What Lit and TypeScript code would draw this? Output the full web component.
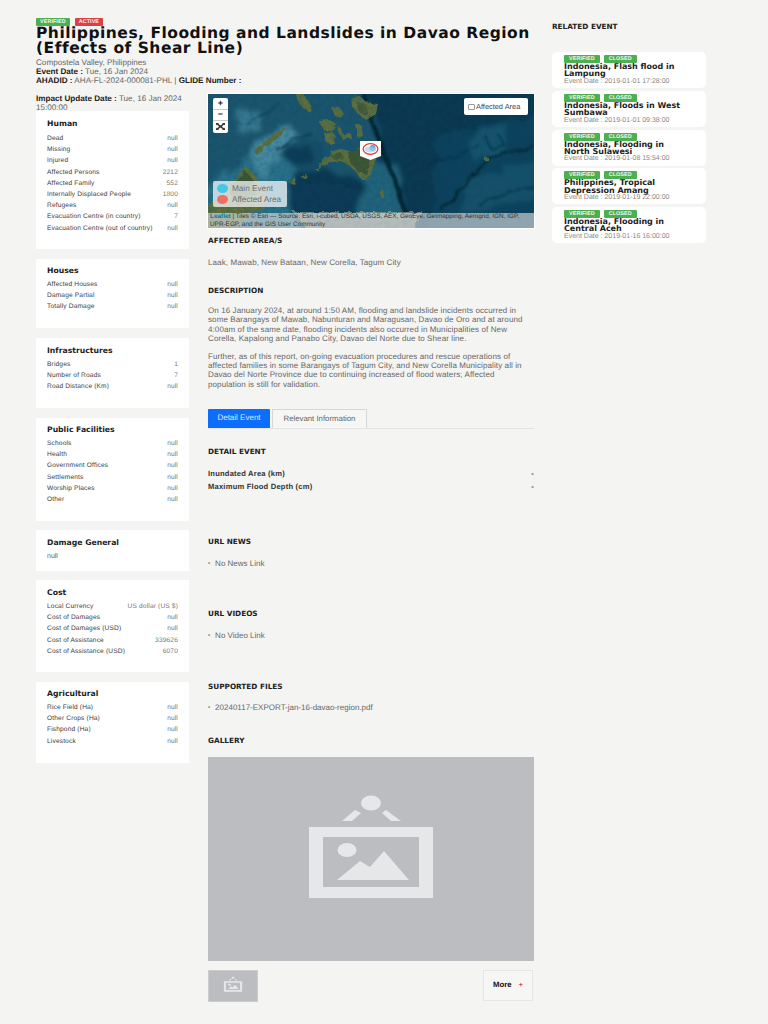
import { LitElement, html, css, svg } from "lit";
import { customElement } from "lit/decorators.js";

const cards: { title: string; rows?: [string, string][]; text?: string; cls: string }[] = [
  { title: "Human", cls: "c-human", rows: [["Dead","null"],["Missing","null"],["Injured","null"],["Affected Persons","2212"],["Affected Family","552"],["Internally Displaced People","1800"],["Refugees","null"],["Evacuation Centre (in country)","7"],["Evacuation Centre (out of country)","null"]] },
  { title: "Houses", cls: "c-houses", rows: [["Affected Houses","null"],["Damage Partial","null"],["Totally Damage","null"]] },
  { title: "Infrastructures", cls: "c-infra", rows: [["Bridges","1"],["Number of Roads","7"],["Road Distance (Km)","null"]] },
  { title: "Public Facilities", cls: "c-public", rows: [["Schools","null"],["Health","null"],["Government Offices","null"],["Settlements","null"],["Worship Places","null"],["Other","null"]] },
  { title: "Damage General", cls: "c-general", text: "null" },
  { title: "Cost", cls: "c-cost", rows: [["Local Currency","US dollar (US $)"],["Cost of Damages","null"],["Cost of Damages (USD)","null"],["Cost of Assistance","339626"],["Cost of Assistance (USD)","6070"]] },
  { title: "Agricultural", cls: "c-agri", rows: [["Rice Field (Ha)","null"],["Other Crops (Ha)","null"],["Fishpond (Ha)","null"],["Livestock","null"]] },
];

const related = [
  ["Indonesia, Flash flood in Lampung", "2019-01-01 17:28:00"],
  ["Indonesia, Floods in West Sumbawa", "2019-01-01 09:38:00"],
  ["Indonesia, Flooding in North Sulawesi", "2019-01-08 15:54:00"],
  ["Philippines, Tropical Depression Amang", "2019-01-19 22:00:00"],
  ["Indonesia, Flooding in Central Aceh", "2019-01-16 16:00:00"],
];

const placeholder = html`<svg viewBox="0 0 326 204" preserveAspectRatio="none" class="ph">
  <rect width="326" height="204" fill="#bcbdc0"></rect>
  <ellipse cx="163" cy="46" rx="10" ry="7.5" fill="#e6e7e9"></ellipse>
  <polygon points="134,64 147,53 153,56 144,64" fill="#e6e7e9"></polygon>
  <polygon points="174,56 178,53 193,64 183,64" fill="#e6e7e9"></polygon>
  <path fill-rule="evenodd" d="M101 70H225V141H101ZM115 80V130H211V80Z" fill="#e6e7e9"></path>
  <ellipse cx="139" cy="93" rx="9.5" ry="7" fill="#e6e7e9"></ellipse>
  <polygon points="129,123 152,104 162,110 176,94 201,123" fill="#e6e7e9"></polygon>
</svg>`;

const mapArt = svg`
  <defs>
    <filter id="wide" x="-20%" y="-20%" width="140%" height="140%">
      <feTurbulence type="fractalNoise" baseFrequency="0.05" numOctaves="3" seed="7"></feTurbulence>
      <feDisplacementMap in="SourceGraphic" scale="14"></feDisplacementMap>
      <feGaussianBlur stdDeviation="2.5"></feGaussianBlur>
    </filter>
    <filter id="rough" x="-10%" y="-10%" width="120%" height="120%">
      <feTurbulence type="fractalNoise" baseFrequency="0.16" numOctaves="3" seed="4"></feTurbulence>
      <feDisplacementMap in="SourceGraphic" scale="5"></feDisplacementMap>
      <feGaussianBlur stdDeviation="0.65"></feGaussianBlur>
    </filter>
    <filter id="ridge" x="-10%" y="-10%" width="120%" height="120%">
      <feTurbulence type="fractalNoise" baseFrequency="0.09" numOctaves="2" seed="11"></feTurbulence>
      <feDisplacementMap in="SourceGraphic" scale="6"></feDisplacementMap>
      <feGaussianBlur stdDeviation="1"></feGaussianBlur>
    </filter>
    <filter id="grain">
      <feTurbulence type="fractalNoise" baseFrequency="0.22" numOctaves="3" seed="2"></feTurbulence>
      <feColorMatrix values="0 0 0 0 0  0 0 0 0 0.08  0 0 0 0 0.12  1.6 0 0 0 -0.55"></feColorMatrix>
    </filter>
  </defs>
  <rect width="326" height="134" fill="#0c3650"></rect>
  <g filter="url(#wide)">
    <polygon points="-10,-10 150,-10 172,30 172,60 162,88 128,80 100,62 60,92 20,112 -10,100" fill="#1c526d"></polygon>
    <polygon points="30,18 52,18 52,38 30,38" fill="#377890"></polygon>
    <polygon points="64,42 112,46 118,76 76,82" fill="#174d68"></polygon>
    <polygon points="72,56 100,50 108,66 80,76" fill="#103a55"></polygon>
    <polygon points="-10,96 40,62 70,58 92,78 78,108 96,140 -10,140" fill="#2b6f89"></polygon>
    <polygon points="42,58 80,30 88,40 66,70 54,84" fill="#4689a0"></polygon>
    <polygon points="80,90 155,92 160,140 96,140" fill="#0e3854"></polygon>
    <polygon points="156,68 190,70 198,125 150,125" fill="#21627a"></polygon>
    <polygon points="230,40 336,20 336,140 220,140" fill="#0f415b"></polygon>
    <polygon points="268,30 298,28 296,62 262,66" fill="#17536c"></polygon>
    <polygon points="260,85 336,62 336,100 250,120" fill="#165069"></polygon>
  </g>
  <g filter="url(#ridge)" fill="none">
    <polyline points="156,0 160,14 166,33 179,67 190,95 198,122" stroke="#06202f" stroke-width="4.5"></polyline>
    <polyline points="326,53 306,57 288,62 279,67 268,78 259,90 245,104 233,116" stroke="#072535" stroke-width="2.4"></polyline>
    <polyline points="40,30 58,18 72,10" stroke="#123f5a" stroke-width="2"></polyline>
    <polyline points="68,56 88,44 104,40" stroke="#0d3550" stroke-width="2"></polyline>
    <polyline points="220,70 250,62 270,50" stroke="#0a3148" stroke-width="1.4"></polyline>
    <polyline points="270,110 300,98 326,92" stroke="#0a3148" stroke-width="1.4"></polyline>
    <polyline points="276,40 284,56 296,52 290,40" stroke="#0a3148" stroke-width="1.6"></polyline>
  </g>
  <g filter="url(#rough)">
    <g fill="#5f6e3c">
      <polygon points="88,0 96,0 103,12 102,18 95,14 90,8"></polygon>
      <polygon points="123,13 132,14 137,21 128,23"></polygon>
      <polygon points="110,26 120,25 128,30 124,37 116,37"></polygon>
      <polygon points="116,40 124,38 128,42 127,50 122,50 116,46"></polygon>
      <polygon points="128,33 131,32 137,44 134,45"></polygon>
      <polygon points="133,41 143,40 144,44 135,46"></polygon>
      <polygon points="143,3 152,2 158,8 170,10 168,20 158,26 150,20 144,12"></polygon>
      <polygon points="147,30 153,30 155,42 150,44"></polygon>
      <polygon points="45,57 56,48 68,39 76,33 78,35 68,46 56,54 48,60"></polygon>
      <polygon points="107,76 112,70 117,65 125,57 133,55 141,57 147,57 153,50 162,54 167,63 165,74 163,80 158,86 153,85 148,78 143,73 133,67 122,68 116,70 110,76"></polygon>
      <polygon points="-4,140 -4,116 14,100 28,84 37,72 45,78 54,94 60,106 54,116 44,118 30,134"></polygon>
      <polygon points="80,88 88,84 86,90"></polygon>
      <polygon points="92,83 99,80 97,85"></polygon>
      <polygon points="172,98 175,96 176,104 173,104"></polygon>
      <polygon points="277,63 280,63 280,67 277,68"></polygon>
    </g>
    <polygon points="140,58 155,54 162,66 158,80 150,78 142,68" fill="#3f5430"></polygon>
    <polygon points="20,96 36,76 44,84 50,98 30,112" fill="#3b5530"></polygon>
    <polygon points="122,62 132,58 136,64 126,66" fill="#465a32"></polygon>
    <polygon points="148,8 158,10 160,20 152,20" fill="#495c34"></polygon>
    <polygon points="85,118 135,118 175,118 215,118 205,136 100,136" fill="#cfc9a8" opacity="0.5"></polygon>
  </g>
  <rect width="326" height="134" filter="url(#grain)" opacity="0.35"></rect>
`;

@customElement("app-root")
export class AppRoot extends LitElement {
  static styles = css`
    :host { display: block; width: 768px; height: 1024px; overflow: hidden; background: #f4f4f2;
      font-family: "Liberation Sans", Arial, sans-serif; color: #666; font-size: 8px; text-rendering: geometricPrecision; }
    * { box-sizing: border-box; }
    .page { display: flex; padding: 18px 0 0 36px; gap: 18px; }
    .main { width: 498px; }
    .aside { width: 154px; }
    .badges { display: flex; gap: 5px; height: 8px; }
    .badge { display: block; height: 8px; line-height: 8px; padding: 0 4px; border-radius: 1px; color: #f3f6f0; font-size: 5.4px; font-weight: 700; letter-spacing: 0.1px; }
    .green { background: #4caf50; }
    .red { background: #dc3f45; }
    h1 { margin: 0; font: 700 15.5px/15px "DejaVu Sans", sans-serif; color: #111; letter-spacing: 0.5px; }
    .meta { margin-top: 2px; line-height: 9px; font-size: 8.15px; }
    .meta p { margin: 0; }
    b { color: #222; font-weight: 700; }
    .cols { display: flex; gap: 19px; margin-top: 9px; }
    .left { width: 153px; }
    .right { width: 326px; }
    .update { line-height: 9px; height: 13px; font-size: 8.15px; }
    .spacer { height: 4px; }
    .card { background: #fff; padding: 6px 11px 0; margin-bottom: 10px; }
    .card h3 { margin: 0 0 3px; font: 700 7.7px/11px "DejaVu Sans", sans-serif; color: #222; }
    .row { display: flex; justify-content: space-between; height: 11.2px; line-height: 11.2px; font-size: 6.6px; color: #3d3d3d; letter-spacing: 0.15px; white-space: nowrap; }
    .row span:last-child { color: #777; }
    .note { font-size: 7px; line-height: 11px; color: #666; margin-top: 3px; }
    .c-human { height: 138px; padding-top: 7px; }
    .c-human h3 { margin-bottom: 4px; }
    .c-houses { height: 69px; }
    .c-infra { height: 70px; padding-top: 7px; }
    .c-public { height: 103px; margin-top: 10px; }
    .c-general { height: 41px; margin-top: -1px; margin-bottom: 9px; padding-top: 7px; }
    .c-cost { height: 92px; margin-bottom: 10px; padding-top: 7px; }
    .c-agri { height: 81px; }
    .map { position: relative; height: 134px; overflow: hidden; outline: 1px solid #fff; }
    .map > svg:first-child { display: block; width: 326px; height: 134px; }
    .zoom { position: absolute; left: 5px; top: 4px; width: 15px; background: #fff; border-radius: 2px; }
    .zoom div { height: 11.5px; display: flex; align-items: center; justify-content: center; color: #222; font: 700 9px/11px "Liberation Sans", sans-serif; border-bottom: 1px solid #ccc; }
    .zoom div:last-child { border-bottom: 0; }
    .zoom svg { width: 9px; height: 7px; }
    .layer { position: absolute; right: 6px; top: 4px; width: 64px; height: 17px; background: #fff; border-radius: 2px; display: flex; align-items: center; padding-left: 4px; gap: 1px; font-size: 7.4px; color: #444; white-space: nowrap; }
    .check { width: 7px; height: 6px; border: 1px solid #999; border-radius: 1px; background: #fff; flex: none; }
    .legend { position: absolute; left: 5px; top: 87px; width: 74px; height: 26px; background: rgba(255,255,255,0.72); border-radius: 2px; padding: 2px 0 0 4px; font-size: 8.2px; color: #6b6f72; }
    .legend div { display: flex; align-items: center; gap: 4px; height: 10.8px; white-space: nowrap; }
    .dot { width: 11px; height: 9px; border-radius: 50%; flex: none; }
    .dot.main { background: #45c8e6; }
    .dot.area { background: #ee6f66; }
    .attr { position: absolute; left: 0; right: 0; bottom: 0; height: 15px; background: rgba(225,225,225,0.62); padding: 0 2px; font-size: 6.4px; line-height: 7.6px; color: #333; }
    .attr a { color: #0078a8; font-weight: 700; }
    .attr span { white-space: nowrap; }
    .marker { position: absolute; left: 152px; top: 47px; width: 21px; height: 19px; }
    h2 { margin: 0; font: 700 7.3px/10px "DejaVu Sans", sans-serif; color: #222; }
    .body { font-size: 8px; line-height: 9.2px; color: #666; letter-spacing: 0.1px; margin: 0; }
    .tabs { display: flex; gap: 2px; height: 20px; border-bottom: 1px solid #e4e4e4; margin-top: 20px; }
    .tab { height: 19px; line-height: 18px; text-align: center; font-size: 7.8px; border-radius: 1px 1px 0 0; }
    .tab.on { width: 62px; background: #0d6efd; color: #dfeaff; font-size: 8px; }
    .tab.off { width: 95px; border: 1px solid #d6d6d6; border-bottom: 0; color: #666; background: #f6f6f4; }
    .kv { display: flex; justify-content: space-between; font: 700 7.6px/13px "Liberation Sans", sans-serif; color: #333; letter-spacing: 0.2px; }
    .li { display: flex; gap: 5px; font-size: 8px; line-height: 10px; color: #666; }
    .li span:first-child { font-size: 6px; }
    .m7 { margin-top: 8px; } .m12 { margin-top: 12px; } .m19 { margin-top: 19px; } .m10 { margin-top: 10px; }
    .m9 { margin-top: 9px; } .m18 { margin-top: 18px; } .m44 { margin-top: 44px; } .m40 { margin-top: 40px; }
    .m41 { margin-top: 41px; } .m11 { margin-top: 11px; } .m23 { margin-top: 23px; }
    .gallery { height: 204px; margin-top: 11px; }
    .ph { display: block; width: 100%; height: 100%; }
    .bottom { display: flex; justify-content: space-between; margin-top: 9px; }
    .thumb { width: 50px; height: 32px; border: 1px solid #ccc; }
    .more { width: 50px; height: 31px; border: 1px solid #e6e6e6; background: #f6f6f4; font: 700 7.8px/28px "Liberation Sans", sans-serif; color: #111; padding-left: 9px; margin-right: 1px; }
    .more i { font-style: normal; color: #e33; font-size: 7px; margin-left: 5px; }
    .aside h2 { margin-top: 4px; height: 30px; }
    .rel { background: #fff; border-radius: 5px; height: 36px; margin-bottom: 2.75px; padding: 3px 0 0 12px; }
    .rel .badges { gap: 4px; }
    .rel .badge { padding: 0 5px; }
    .rel h4 { margin: 0; font: 700 8px/7.4px "DejaVu Sans", sans-serif; color: #222; width: 124px; }
    .rel p { margin: 1px 0 0; font-size: 7px; line-height: 6px; color: #888; white-space: nowrap; }
  `;

  render() {
    return html`<div class="page">
      <div class="main">
        <div class="badges"><span class="badge green">VERIFIED</span><span class="badge red">ACTIVE</span></div>
        <h1>Philippines, Flooding and Landslides in Davao Region (Effects of Shear Line)</h1>
        <div class="meta">
          <p>Compostela Valley, Philippines</p>
          <p><b>Event Date :</b> Tue, 16 Jan 2024</p>
          <p><b>AHADID :</b> AHA-FL-2024-000081-PHL | <b>GLIDE Number :</b></p>
        </div>
        <div class="cols">
          <div class="left">
            <div class="update"><b>Impact Update Date :</b> Tue, 16 Jan 2024<br />15:00:00</div>
            <div class="spacer"></div>
            ${cards.map((c) => html`<div class="card ${c.cls}">
              <h3>${c.title}</h3>
              ${c.rows ? c.rows.map((r) => html`<div class="row"><span>${r[0]}</span><span>${r[1]}</span></div>`) : html`<div class="note">${c.text}</div>`}
            </div>`)}
          </div>
          <div class="right">
            <div class="map">
              <svg viewBox="0 0 326 134">${mapArt}</svg>
              <div class="zoom">
                <div>+</div><div>−</div>
                <div><svg viewBox="0 0 9 7"><path d="M0 0h3L2.2 .8 4.5 2.6 6.8 .8 6 0h3v2.4l-.9-.8L5.8 3.5 8.1 5.4 9 4.6V7H6l.8-.8L4.5 4.4 2.2 6.2 3 7H0V4.6l.9.8L3.2 3.5 .9 1.6 0 2.4Z" fill="#333"></path></svg></div>
              </div>
              <div class="layer"><span class="check"></span>Affected Area</div>
              <div class="legend">
                <div><span class="dot main"></span>Main Event</div>
                <div><span class="dot area"></span>Affected Area</div>
              </div>
              <svg class="marker" viewBox="0 0 21 19">
                <polygon points="0,0 21,0 21,15 10.5,19 0,15" fill="#fff"></polygon>
                <circle cx="12.5" cy="7" r="3" fill="#5b9bd8"></circle>
                <ellipse cx="10.5" cy="8.5" rx="6" ry="3" fill="#a8cdea" opacity="0.7"></ellipse>
                <ellipse cx="10.5" cy="8" rx="7.4" ry="5.4" fill="none" stroke="#e0332c" stroke-width="1.2"></ellipse>
              </svg>
              <div class="attr"><a>Leaflet</a> | Tiles © Esri — Source: Esri, i-cubed, USDA, USGS, AEX, GeoEye, Getmapping, Aerogrid, IGN, IGP, <span>UPR-EGP,</span> and the GIS User Community</div>
            </div>
            <h2 class="m7">AFFECTED AREA/S</h2>
            <p class="body m12">Laak, Mawab, New Bataan, New Corella, Tagum City</p>
            <h2 class="m19">DESCRIPTION</h2>
            <p class="body m10">On 16 January 2024, at around 1:50 AM, flooding and landslide incidents occurred in some Barangays of Mawab, Nabunturan and Maragusan, Davao de Oro and at around 4:00am of the same date, flooding incidents also occurred in Municipalities of New Corella, Kapalong and Panabo City, Davao del Norte due to Shear line.</p>
            <p class="body m9">Further, as of this report, on-going evacuation procedures and rescue operations of affected families in some Barangays of Tagum City, and New Corella Municipality all in Davao del Norte Province due to continuing increased of flood waters; Affected population is still for validation.</p>
            <div class="tabs"><div class="tab on">Detail Event</div><div class="tab off">Relevant Information</div></div>
            <h2 class="m18">DETAIL EVENT</h2>
            <div class="m10">
              <div class="kv"><span>Inundated Area (km)</span><span>-</span></div>
              <div class="kv"><span>Maximum Flood Depth (cm)</span><span>-</span></div>
            </div>
            <h2 class="m44">URL NEWS</h2>
            <div class="li m12"><span>•</span><span>No News Link</span></div>
            <h2 class="m40">URL VIDEOS</h2>
            <div class="li m12"><span>•</span><span>No Video Link</span></div>
            <h2 class="m41">SUPPORTED FILES</h2>
            <div class="li m11"><span>•</span><span>20240117-EXPORT-jan-16-davao-region.pdf</span></div>
            <h2 class="m23">GALLERY</h2>
            <div class="gallery">${placeholder}</div>
            <div class="bottom">
              <div class="thumb">${placeholder}</div>
              <div class="more">More <i>+</i></div>
            </div>
          </div>
        </div>
      </div>
      <div class="aside">
        <h2>RELATED EVENT</h2>
        ${related.map((r) => html`<div class="rel">
          <div class="badges"><span class="badge green">VERIFIED</span><span class="badge green">CLOSED</span></div>
          <h4>${r[0]}</h4>
          <p>Event Date : ${r[1]}</p>
        </div>`)}
      </div>
    </div>`;
  }
}
